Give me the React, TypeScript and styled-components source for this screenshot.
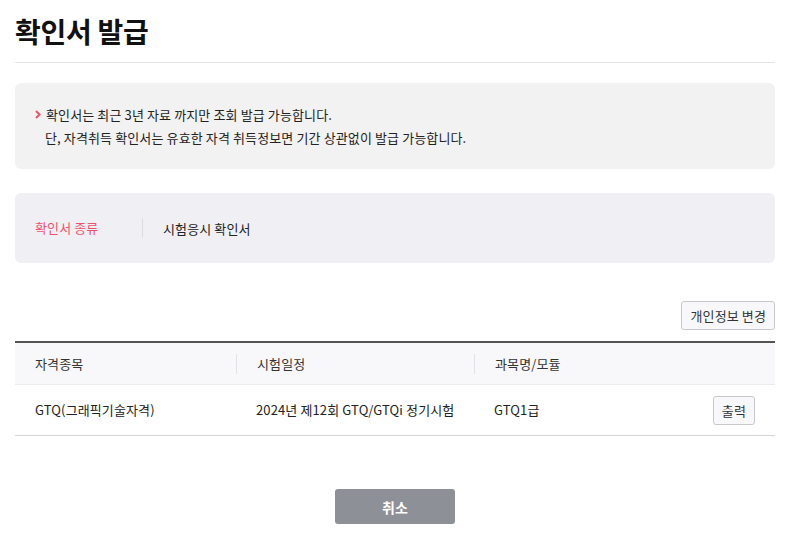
import { createGlobalStyle, styled } from 'styled-components';

const GlobalStyle = createGlobalStyle`
  body {
    margin: 0;
    background: #fff;
    font-family: "Noto Sans CJK KR", "Noto Sans", sans-serif;
    color: #222;
    letter-spacing: 0.12px;
  }
  * { box-sizing: border-box; }
`;

const Page = styled.div`
  padding: 0 12px 0 15px;
  width: 787px;
`;

const Title = styled.h1`
  margin: 0;
  padding: 13px 0 13px;
  font-size: 28px;
  line-height: 36px;
  font-weight: 700;
  color: #111;
  border-bottom: 1px solid #e4e4e4;
  letter-spacing: -0.3px;
`;

const InfoBox = styled.div`
  margin-top: 20px;
  height: 86px;
  background: #f2f2f2;
  border-radius: 6px;
  padding: 20px 20px 0;
`;

const InfoLine = styled.p<{ $first?: boolean }>`
  margin: 0;
  display: flex;
  align-items: center;
  gap: 5px;
  font-size: 13px;
  line-height: 23px;
  color: #222;
  padding-left: ${(p) => (p.$first ? '0' : '10px')};
`;

const TypeBox = styled.div`
  margin-top: 24px;
  height: 70px;
  background: #f0f0f4;
  border-radius: 6px;
  padding: 0 20px;
  display: flex;
  align-items: center;
`;

const TypeLabel = styled.span`
  font-size: 13px;
  color: #f0506e;
  width: 108px;
  border-right: 1px solid #dcdce2;
  line-height: 20px;
`;

const TypeValue = styled.span`
  font-size: 13px;
  color: #222;
  padding-left: 20px;
`;

const Toolbar = styled.div`
  margin-top: 38px;
  display: flex;
  justify-content: flex-end;
`;

const Button = styled.button`
  font-family: inherit;
  font-size: 13px;
  letter-spacing: inherit;
  color: #333;
  background: #f8f8fa;
  border: 1px solid #c8c8cc;
  border-radius: 3px;
  height: 29px;
  padding: 0 8px;
  cursor: pointer;
`;

const Table = styled.div`
  margin-top: 11px;
  border-top: 2px solid #555;
`;

const Row = styled.div<{ $head?: boolean }>`
  display: grid;
  grid-template-columns: 221px 238px 1fr;
  align-items: center;
  height: ${(p) => (p.$head ? '42px' : '51px')};
  background: ${(p) => (p.$head ? '#f8f8fa' : '#fff')};
  border-bottom: 1px solid ${(p) => (p.$head ? '#ececf0' : '#d5d5d8')};
`;

const Cell = styled.div<{ $divider?: boolean }>`
  font-size: 13px;
  color: #222;
  padding: 0 20px;
  display: flex;
  align-items: center;
  justify-content: space-between;
  white-space: nowrap;
  line-height: 20px;
  border-left: ${(p) => (p.$divider ? '1px solid #e2e2e6' : 'none')};
`;

const HeadCell = styled(Cell)`
  color: #333;
`;

const Footer = styled.div`
  margin-top: 53px;
  display: flex;
  justify-content: center;
`;

const CancelButton = styled.button`
  width: 120px;
  height: 35px;
  border: none;
  border-radius: 3px;
  background: #8e9097;
  color: #fff;
  font-family: inherit;
  font-size: 14px;
  font-weight: 700;
`;

function Chevron() {
  return (
    <svg width="6" height="9" viewBox="0 0 6 9">
      <path d="M1 1 L4.5 4.5 L1 8" fill="none" stroke="#f0506e" strokeWidth="2" />
    </svg>
  );
}

export default function App() {
  return (
    <>
      <GlobalStyle />
      <Page>
        <Title>확인서 발급</Title>
        <InfoBox>
          <InfoLine $first>
            <Chevron />
            확인서는 최근 3년 자료 까지만 조회 발급 가능합니다.
          </InfoLine>
          <InfoLine>단, 자격취득 확인서는 유효한 자격 취득정보면 기간 상관없이 발급 가능합니다.</InfoLine>
        </InfoBox>
        <TypeBox>
          <TypeLabel>확인서 종류</TypeLabel>
          <TypeValue>시험응시 확인서</TypeValue>
        </TypeBox>
        <Toolbar>
          <Button>개인정보 변경</Button>
        </Toolbar>
        <Table>
          <Row $head>
            <HeadCell>자격종목</HeadCell>
            <HeadCell $divider>시험일정</HeadCell>
            <HeadCell $divider>과목명/모듈</HeadCell>
          </Row>
          <Row>
            <Cell>GTQ(그래픽기술자격)</Cell>
            <Cell>2024년 제12회 GTQ/GTQi 정기시험</Cell>
            <Cell>
              GTQ1급
              <Button>출력</Button>
            </Cell>
          </Row>
        </Table>
        <Footer>
          <CancelButton>취소</CancelButton>
        </Footer>
      </Page>
    </>
  );
}
